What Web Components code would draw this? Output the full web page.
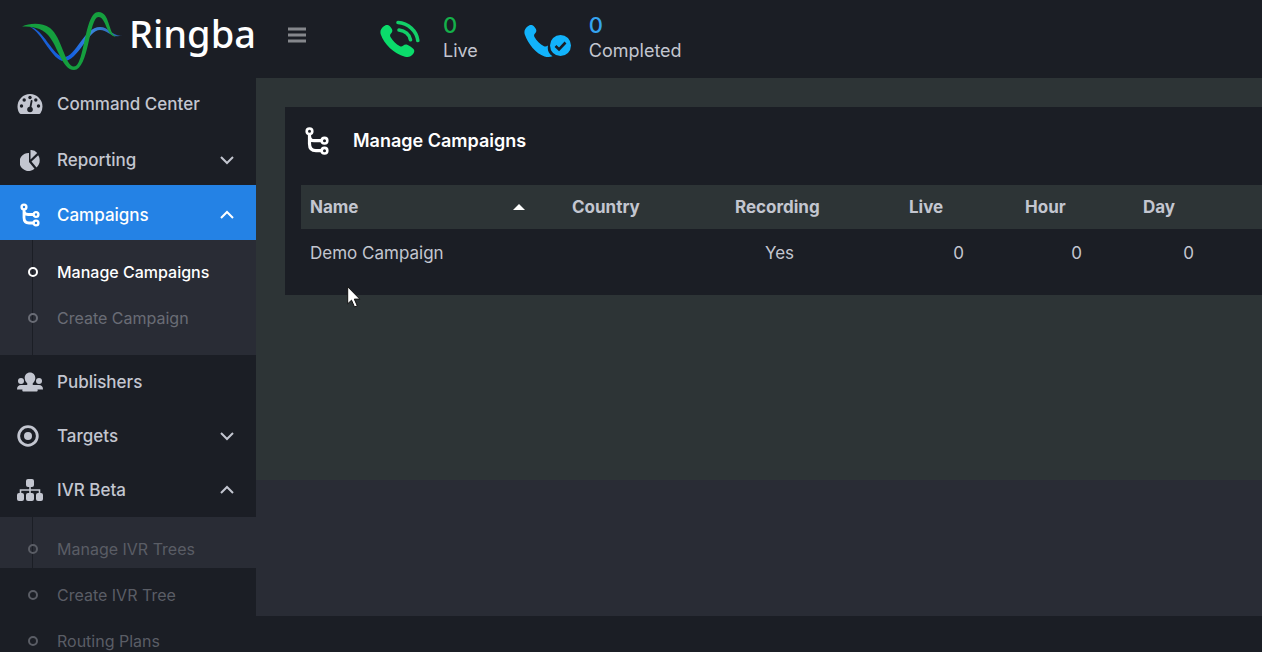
<!DOCTYPE html>
<html lang="en">
<head>
<meta charset="utf-8">
<meta name="viewport" content="width=device-width, initial-scale=1">
<title>Ringba</title>
<style>
  :root {
    --ink: #1b1e25;
    --slate: #292c35;
    --moss: #2d3436;
    --text: #c3c6d0;
    --blue: #2482e5;
  }
  body {
    margin: 0;
    background: var(--ink);
    color: var(--text);
    font: 17px/24px Inter, "Liberation Sans", sans-serif;
  }
</style>
</head>
<body>
<rb-app>
  <rb-topbar slot="top">
    <rb-stat icon="live" value="0" color="#14b04a">Live</rb-stat>
    <rb-stat icon="completed" value="0" color="#35a4f0">Completed</rb-stat>
  </rb-topbar>

  <rb-sidebar slot="side">
    <rb-nav-item icon="gauge" compact>Command Center</rb-nav-item>
    <rb-nav-item icon="pie" toggle="closed" tall>Reporting</rb-nav-item>
    <rb-nav-item icon="branch" toggle="open" tall active>Campaigns</rb-nav-item>
    <rb-submenu>
      <rb-sub-item active>Manage Campaigns</rb-sub-item>
      <rb-sub-item>Create Campaign</rb-sub-item>
    </rb-submenu>
    <rb-nav-item icon="users">Publishers</rb-nav-item>
    <rb-nav-item icon="target" toggle="closed">Targets</rb-nav-item>
    <rb-nav-item icon="sitemap" toggle="open">IVR Beta</rb-nav-item>
    <rb-submenu fading>
      <rb-sub-item>Manage IVR Trees</rb-sub-item>
      <rb-sub-item>Create IVR Tree</rb-sub-item>
      <rb-sub-item>Routing Plans</rb-sub-item>
    </rb-submenu>
  </rb-sidebar>

  <rb-card icon="tree" heading="Manage Campaigns">
    <rb-campaign-table></rb-campaign-table>
    <rb-pointer slot="overlay"></rb-pointer>
  </rb-card>
</rb-app>

<script>
const icons = {
  gauge: [26, 22, `
    <path fill="currentColor" d="M13 1A12.500 12.500 0 0 0 .5 13.500c0 2.500.7 4.800 1.900 6.600.3.500.8.900 1.500.9h18.200c.7 0 1.200-.4 1.500-.9a12.500 12.500 0 0 0 1.900-6.600A12.500 12.500 0 0 0 13 1Z"/>
    <g fill="#1b1e25"><circle cx="4.500" cy="13" r="1.700"/><circle cx="7.200" cy="7" r="1.700"/><circle cx="13" cy="4.500" r="1.700"/><circle cx="18.800" cy="7" r="1.700"/><circle cx="21.500" cy="13" r="1.700"/><circle cx="13" cy="16.500" r="2.800"/></g>
    <path d="M13.300 15 14.600 8" stroke="#1b1e25" stroke-width="1.800" stroke-linecap="round"/>`],
  pie: [20, 22, `
    <g fill="currentColor">
      <path d="M9 4v9l5.500 6.700A9 9 0 1 1 9 4Z"/>
      <path d="M10.500 1a7.500 7.500 0 0 1 6.700 3l-6.700 6.600Z"/>
      <path d="m18.200 6.300-6.700 6.200 5 6c3.500-3 4.200-8 1.700-12.200Z"/>
    </g>`],
  tree: [24, 28, `
    <g fill="none" stroke="currentColor" stroke-width="2.600">
      <circle cx="4.500" cy="4.300" r="2.800"/>
      <circle cx="19.500" cy="13.700" r="2.800"/>
      <circle cx="19.500" cy="23.700" r="2.800"/>
      <path stroke-width="3.200" d="M4.500 7.500v9.200c0 4.500 2.500 7 6.500 7h6M4.500 9c0 3 1.500 4.700 4.500 4.700h8"/>
    </g>`],
  branch: [20, 24, `
    <g fill="none" stroke="currentColor" stroke-width="2.400">
      <circle cx="4" cy="4" r="2.400"/>
      <circle cx="16" cy="11.500" r="2.400"/>
      <circle cx="16" cy="20" r="2.400"/>
      <path stroke-width="2.800" d="M4 6.500v8c0 3.500 2 5.500 5 5.500h5M4 8c0 2.200 1.500 3.500 4 3.500h6"/>
    </g>`],
  users: [26, 20, `
    <g fill="currentColor">
      <circle cx="4" cy="9" r="3"/><circle cx="22" cy="9" r="3"/>
      <path d="M0 17.500c0-2.900 1.500-4.500 4-4.500h18c2.500 0 4 1.600 4 4.500Z"/>
      <path d="M13 .5c3.200 0 5.300 2.300 5.300 5.600 0 2.200-1 4.200-2.600 5.300v1.300c3 .7 5 2.200 5 5.600 0 .9-.5 1.200-1.200 1.200h-13c-.7 0-1.200-.3-1.200-1.200 0-3.400 2-4.900 5-5.600v-1.300a6.500 6.500 0 0 1-2.600-5.300C7.700 2.800 9.800.5 13 .5Z"/>
    </g>`],
  target: [26, 22, `
    <circle cx="11" cy="11" r="9.300" fill="none" stroke="currentColor" stroke-width="2.800"/>
    <circle cx="11" cy="11" r="4" fill="currentColor"/>`],
  sitemap: [26, 24, `
    <g fill="currentColor">
      <rect x="9" y="1" width="8" height="8" rx="2"/>
      <rect x="0" y="15" width="7" height="8" rx="2"/>
      <rect x="9" y="15" width="8" height="8" rx="2"/>
      <rect x="19" y="15" width="7" height="8" rx="2"/>
    </g>
    <path fill="none" stroke="currentColor" stroke-width="1.600" d="M13 7v9M3.500 16v-4h19v4"/>`],
  bars: [18, 18, `
    <path stroke="currentColor" stroke-width="3" d="M0 3h18M0 9h18M0 15h18"/>`],
  down: [14, 10, `
    <path fill="none" stroke="currentColor" stroke-width="2" d="m1 2 6 6 6-6"/>`],
  up: [14, 10, `
    <path fill="none" stroke="currentColor" stroke-width="2" d="m1 8 6-6 6 6"/>`],
  live: [40, 38, `
    <path fill="#0bdc6b" d="M3.500 6.500C5 5 6.500 4.500 8.500 5.200c1.500.7 3.200 3 3.700 4.600.4 1.400-.2 2.700-1.400 4-.9 1-.9 2-.3 3.200 2.300 4 5.400 7 9.500 9.200 1.200.6 2 .3 3-.5 1.300-1 2.700-1.400 4.200-.9 1.800.5 4.700 2.500 6.300 4.200 1.300 1.500.9 3.500-.4 5-2.200 2.700-4.600 3.600-8.100 2.700C13.500 33.500 4 24 .8 14.500-.2 11.200.8 8.800 3.500 6.500Z"/>
    <g fill="none" stroke="#12cf68" stroke-width="3.600" stroke-linecap="round">
      <path d="M18 2.500c10 .5 18.700 8.500 19.800 18"/>
      <path d="M19 10c6 .8 10.500 4.500 11.500 9.800"/>
    </g>`],
  completed: [48, 38, `
    <path fill="#12b3fb" d="M3.500 6.500C5 5 6.500 4.500 8.500 5.200c1.500.7 3.200 3 3.700 4.600.4 1.400-.2 2.700-1.400 4-.9 1-.9 2-.3 3.200 2 3.800 5.500 7.200 9.500 9.200 1.500.6 2.500.2 4-.6-.8 4.500.4 8 4.500 10.700-2.500 1-5 1-8 .2C12 33.500 4 24 .8 14.500-.2 11.200.8 8.800 3.500 6.500Z"/>
    <circle cx="36.500" cy="25.500" r="10.500" fill="#12b3fb"/>
    <path fill="none" stroke="#1b1e25" stroke-width="2.600" d="m31.500 26 3.500 3.300 6.500-6.800"/>`]
}

class RbIcon extends HTMLElement {
  connectedCallback() {
    const [w, h, body] = icons[this.getAttribute('name')]
    this.attachShadow({mode: 'open'}).innerHTML = `
      <style>
        :host { display: inline-flex; flex: none; }
        svg { display: block; }
      </style>
      <svg width="${w}" height="${h}" viewBox="0 0 ${w} ${h}" aria-hidden="true">${body}</svg>
    `
  }
}

class RbApp extends HTMLElement {
  constructor() {
    super()
    this.attachShadow({mode: 'open'}).innerHTML = `
      <style>
        :host {
          display: grid;
          grid-template: auto minmax(0, 1fr) / 256px minmax(0, 1fr);
          height: 100vh;
          overflow: hidden;
        }
        header { grid-column: 1 / -1; }
        nav { overflow: hidden; }
        main {
          display: grid;
          grid-template-rows: 1fr 136px 36px;
          min-height: 0;
        }
        .content { padding: 29px 0 0 29px; background: var(--moss); }
        .band { background: var(--slate); }
      </style>
      <header><slot name="top"></slot></header>
      <nav aria-label="Main"><slot name="side"></slot></nav>
      <main>
        <div class="content"><slot></slot></div>
        <div class="band"></div>
      </main>
    `
  }
}

class RbLogo extends HTMLElement {
  constructor() {
    super()
    this.attachShadow({mode: 'open'}).innerHTML = `
      <style>
        :host { display: block; }
        a {
          display: flex;
          align-items: center;
          gap: 6px;
          color: #fff;
          font: 500 38px/60px "Noto Sans", sans-serif;
          text-decoration: none;
        }
        svg { flex: none; }
        span { margin-top: -16px; }
      </style>
      <a href="#">
        <svg width="101" height="60" viewBox="0 0 101 60" aria-hidden="true">
          <defs>
            <linearGradient id="wave">
              <stop offset="0" stop-color="#1a5fd0"/>
              <stop offset=".45" stop-color="#1560e0"/>
              <stop offset=".65" stop-color="#3a85e0"/>
              <stop offset="1" stop-color="#2860a8"/>
            </linearGradient>
          </defs>
          <path fill="url(#wave)" d="M8 16c13 1 23 30 34 30 12 0 20-30 36-30 9 0 13 10 22 8.500C90 28 86 19 78 19 66 19 56 50 42 50 30 50 20 21 8 16Z"/>
          <path fill="#159f3e" d="M0 15.500C8 12 20 11.500 28 17c12 9 15 38.500 24 38.500C63 55.500 62 1 76.500 1 88 1 86 22 94 26c-10-1-10-20-17.500-20C67 6 67 59 52 59 40 59 36 35 26 24 19 16.500 10 15.500 0 15.500Z"/>
        </svg>
        <span>Ringba</span>
      </a>
    `
  }
}

class RbTopbar extends HTMLElement {
  constructor() {
    super()
    this.attachShadow({mode: 'open'}).innerHTML = `
      <style>
        :host {
          display: flex;
          align-items: flex-start;
          height: 78px;
          box-sizing: border-box;
          padding: 11px 22px 0;
        }
        rb-logo { width: 266px; }
        button {
          display: flex;
          margin: 15px 0 0;
          padding: 0;
          border: 0;
          background: none;
          color: #85878c;
        }
        .stats { display: flex; gap: 46px; margin-left: 74px; }
      </style>
      <rb-logo></rb-logo>
      <button type="button" aria-label="Menu"><rb-icon name="bars"></rb-icon></button>
      <div class="stats"><slot></slot></div>
    `
  }
}

class RbStat extends HTMLElement {
  connectedCallback() {
    this.attachShadow({mode: 'open'}).innerHTML = `
      <style>
        :host { display: flex; gap: 17px; }
        rb-icon { min-width: 46px; margin-top: 9px; }
        strong {
          display: block;
          color: ${this.getAttribute('color')};
          font-size: 22px;
          line-height: 28px;
          font-weight: 500;
        }
        span { display: block; font-size: 18px; }
      </style>
      <rb-icon name="${this.getAttribute('icon')}"></rb-icon>
      <div>
        <strong>${this.getAttribute('value')}</strong>
        <span><slot></slot></span>
      </div>
    `
  }
}

class RbSidebar extends HTMLElement {
  constructor() {
    super()
    this.attachShadow({mode: 'open'}).innerHTML = `
      <style>
        :host { display: block; background: var(--ink); }
      </style>
      <slot></slot>
    `
  }
}

class RbNavItem extends HTMLElement {
  connectedCallback() {
    const toggle = this.getAttribute('toggle')
    const chevron = toggle
      ? `<rb-icon name="${toggle === 'open' ? 'up' : 'down'}"></rb-icon>`
      : ''
    this.attachShadow({mode: 'open'}).innerHTML = `
      <style>
        :host { display: block; }
        a {
          display: flex;
          align-items: center;
          height: 54px;
          box-sizing: border-box;
          padding: 0 22px 0 16px;
          color: inherit;
          font-weight: 500;
          text-decoration: none;
        }
        :host([compact]) a { height: 52px; }
        :host([tall]) a { height: 55px; padding-top: 4px; }
        :host([active]) a { background: var(--blue); color: #fff; }
        .icon { display: flex; justify-content: center; width: 28px; margin-right: 13px; }
        .label { flex: 1; }
      </style>
      <a href="#">
        <span class="icon"><rb-icon name="${this.getAttribute('icon')}"></rb-icon></span>
        <span class="label"><slot></slot></span>
        ${chevron}
      </a>
    `
  }
}

class RbSubmenu extends HTMLElement {
  constructor() {
    super()
    this.attachShadow({mode: 'open'}).innerHTML = `
      <style>
        :host {
          display: block;
          padding: 9px 0 14px;
          background:
            linear-gradient(var(--ink), var(--ink)) 32px 0 / 1px 100% no-repeat,
            var(--slate);
        }
        :host([fading]) {
          background:
            linear-gradient(var(--ink), var(--ink)) 32px 0 / 1px 100% no-repeat,
            linear-gradient(var(--slate) 51px, var(--ink) 51px);
          --muted: #5a5d65;
        }
      </style>
      <slot></slot>
    `
  }
}

class RbSubItem extends HTMLElement {
  constructor() {
    super()
    this.attachShadow({mode: 'open'}).innerHTML = `
      <style>
        :host { display: block; }
        a {
          display: flex;
          align-items: center;
          gap: 19px;
          height: 46px;
          padding-left: 28px;
          color: var(--muted, #696c75);
          font-size: 16px;
          text-decoration: none;
        }
        a::before {
          content: "";
          width: 6px;
          height: 6px;
          border: 2px solid;
          border-radius: 50%;
        }
        :host([active]) a { color: #fff; font-weight: 500; }
      </style>
      <a href="#"><slot></slot></a>
    `
  }
}

class RbCard extends HTMLElement {
  connectedCallback() {
    this.attachShadow({mode: 'open'}).innerHTML = `
      <style>
        :host {
          display: block;
          position: relative;
          padding: 0 0 18px 16px;
          background: var(--ink);
          color: var(--text);
        }
        h1 {
          display: flex;
          align-items: center;
          gap: 24px;
          height: 68px;
          margin: 0;
          padding: 0 0 10px 4px;
          color: #fff;
          font-size: 18px;
          font-weight: 600;
        }
      </style>
      <h1><rb-icon name="${this.getAttribute('icon')}"></rb-icon>${this.getAttribute('heading')}</h1>
      <slot></slot>
      <slot name="overlay"></slot>
    `
  }
}

class RbCampaignTable extends HTMLElement {
  constructor() {
    super()
    this.attachShadow({mode: 'open'}).innerHTML = `
      <style>
        :host { display: block; }
        table { width: 100%; border-collapse: collapse; table-layout: fixed; }
        th, td { padding: 0 9px; text-align: left; }
        th { height: 44px; background: var(--moss); font-weight: 700; }
        td { height: 48px; }
        .name { width: 244px; }
        .country { width: 145px; }
        .recording { width: 156px; }
        .live { width: 98px; }
        .hour { width: 100px; }
        .day { width: 94px; }
        button {
          display: flex;
          align-items: center;
          justify-content: space-between;
          width: 100%;
          padding: 0 29px 0 0;
          border: 0;
          background: none;
          color: inherit;
          font: inherit;
        }
        button::after {
          content: "";
          border: 6px solid transparent;
          border-top: 0;
          border-bottom-color: #fff;
        }
        td.yes { padding-right: 76px; text-align: center; }
        td.count { padding-right: 52px; text-align: right; }
      </style>
      <table>
        <thead>
          <tr>
            <th class="name" aria-sort="ascending"><button type="button">Name</button></th>
            <th class="country">Country</th>
            <th class="recording">Recording</th>
            <th class="live">Live</th>
            <th class="hour">Hour</th>
            <th class="day">Day</th>
            <th></th>
          </tr>
        </thead>
        <tbody>
          <tr>
            <td>Demo Campaign</td>
            <td></td>
            <td class="yes">Yes</td>
            <td class="count">0</td>
            <td class="count">0</td>
            <td class="count">0</td>
            <td></td>
          </tr>
        </tbody>
      </table>
    `
  }
}

class RbPointer extends HTMLElement {
  constructor() {
    super()
    this.attachShadow({mode: 'open'}).innerHTML = `
      <style>
        :host {
          position: absolute;
          left: 62px;
          top: 179px;
          pointer-events: none;
        }
        svg { display: block; }
      </style>
      <svg width="14" height="22" viewBox="0 0 14 22" aria-hidden="true">
        <path fill="#fff" stroke="#111" d="M.7.800v17l3.800-3.600 3 6.800 2.800-1.200-3-6.700h5.500Z"/>
      </svg>
    `
  }
}

customElements.define('rb-icon', RbIcon)
customElements.define('rb-logo', RbLogo)
customElements.define('rb-app', RbApp)
customElements.define('rb-topbar', RbTopbar)
customElements.define('rb-stat', RbStat)
customElements.define('rb-sidebar', RbSidebar)
customElements.define('rb-nav-item', RbNavItem)
customElements.define('rb-submenu', RbSubmenu)
customElements.define('rb-sub-item', RbSubItem)
customElements.define('rb-card', RbCard)
customElements.define('rb-campaign-table', RbCampaignTable)
customElements.define('rb-pointer', RbPointer)
</script>
</body>
</html>
